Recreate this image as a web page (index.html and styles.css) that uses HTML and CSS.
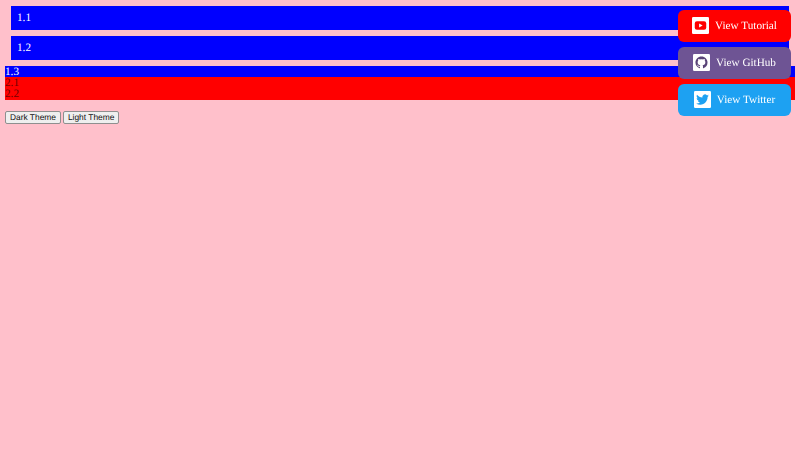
FILE: index.html
```html
<!DOCTYPE html>
<html>
<head>
	<title>Theme test</title>
	<link rel="stylesheet" href="styles.css">
</head>
<body>
	<div class="_blue">
		<div class="_box">1.1</div>
		<div class="_box">1.2</div>
		<div class="_row">1.3</div>
	</div>
	<div class="_red">
		<div class="_row">2.1</div>
		<div class="_row">2.2</div>
	</div>
	<div class="_themes">
		<button>Dark Theme</button>
		<button>Light Theme</button>
	</div>
	<div class="_links">
		<a class="_link _youtube" href="#">
			<svg viewBox="0 0 16 16" width="17" height="17">
				<rect width="16" height="16" rx="1.2" fill="#fff"/>
				<rect x="2.6" y="4" width="10.8" height="8" rx="2" fill="#f00"/>
				<path d="M6.7 6.1v3.8L10 8z" fill="#fff"/>
			</svg>
			<span>View Tutorial</span>
		</a>
		<a class="_link _github" href="#">
			<svg viewBox="0 0 16 16" width="17" height="17">
				<rect width="16" height="16" rx="1.2" fill="#fff"/>
				<path transform="translate(2.3 2.3) scale(.71)" fill="#5a4478" d="M8 0C3.58 0 0 3.58 0 8c0 3.54 2.29 6.53 5.47 7.59.4.07.55-.17.55-.38 0-.19-.01-.82-.01-1.49-2.01.37-2.53-.49-2.69-.94-.09-.23-.48-.94-.82-1.13-.28-.15-.68-.52-.01-.53.63-.01 1.08.58 1.23.82.72 1.21 1.87.87 2.33.66.07-.52.28-.87.51-1.07-1.78-.2-3.64-.89-3.64-3.95 0-.87.31-1.59.82-2.15-.08-.2-.36-1.02.08-2.12 0 0 .67-.21 2.2.82.64-.18 1.32-.27 2-.27s1.36.09 2 .27c1.53-1.04 2.2-.82 2.2-.82.44 1.1.16 1.92.08 2.12.51.56.82 1.27.82 2.15 0 3.07-1.87 3.75-3.65 3.95.29.25.54.73.54 1.48 0 1.07-.01 1.93-.01 2.2 0 .21.15.46.55.38A8.01 8.01 0 0 0 16 8c0-4.42-3.58-8-8-8z"/>
			</svg>
			<span>View GitHub</span>
		</a>
		<a class="_link _twitter" href="#">
			<svg viewBox="0 0 16 16" width="17" height="17">
				<rect width="16" height="16" rx="1.2" fill="#fff"/>
				<path transform="translate(2 2) scale(.5)" fill="#1da1f2" d="M23.95 4.57a10 10 0 0 1-2.82.77 4.96 4.96 0 0 0 2.16-2.72c-.95.55-2 .95-3.12 1.18a4.92 4.92 0 0 0-8.38 4.48C7.69 8.1 4.07 6.13 1.64 3.16a4.82 4.82 0 0 0-.67 2.48c0 1.7.87 3.21 2.19 4.1a4.9 4.9 0 0 1-2.23-.62v.06a4.92 4.92 0 0 0 3.95 4.83 5 5 0 0 1-2.21.08 4.94 4.94 0 0 0 4.6 3.42A9.87 9.87 0 0 1 0 19.54a14 14 0 0 0 7.56 2.21c9.05 0 14-7.5 14-13.98 0-.21 0-.42-.02-.63A9.94 9.94 0 0 0 24 4.59z"/>
			</svg>
			<span>View Twitter</span>
		</a>
	</div>
</body>
</html>
```
FILE: styles.css
```css
html, body {
	height: 100%;
	margin: 0;
}

body {
	background: #ffc0cb;
	font-family: "Liberation Serif", serif;
	font-size: 11.2px;
	line-height: 11.2px;
	text-rendering: geometricPrecision;
	padding: 0 5px;
	box-sizing: border-box;
}

._blue {
	padding-top: 6px;
	color: #fff;
}

._box {
	background: #00f;
	height: 24px;
	line-height: 25px;
	margin: 0 6px 6px;
	padding-left: 6px;
}

._row {
	height: 11.2px;
	line-height: 12.6px;
}

._blue ._row {
	background: #00f;
}

._red {
	background: #f00;
	color: #700000;
}

._themes {
	display: flex;
	gap: 2px;
	margin-top: 11px;
}

._themes button {
	font-family: "Liberation Sans", sans-serif;
	font-size: 8.4px;
	line-height: normal;
	text-rendering: geometricPrecision;
	padding: 0 4px;
	height: 13.5px;
	background: #efefef;
	border: 1px solid #8f8f8f;
	border-radius: 2px;
	color: #111;
}

._links {
	position: fixed;
	top: 10px;
	right: 9px;
	display: flex;
	flex-direction: column;
	gap: 5.5px;
}

._link {
	display: flex;
	align-items: center;
	justify-content: center;
	gap: 6px;
	width: 113px;
	height: 31.5px;
	border-radius: 6px;
	color: #fff;
	text-decoration: none;
	line-height: 14px;
}

._link svg {
	flex-shrink: 0;
}

._youtube {
	background: #f00;
}

._github {
	background: #6e5494;
}

._twitter {
	background: #1da1f2;
}
```
